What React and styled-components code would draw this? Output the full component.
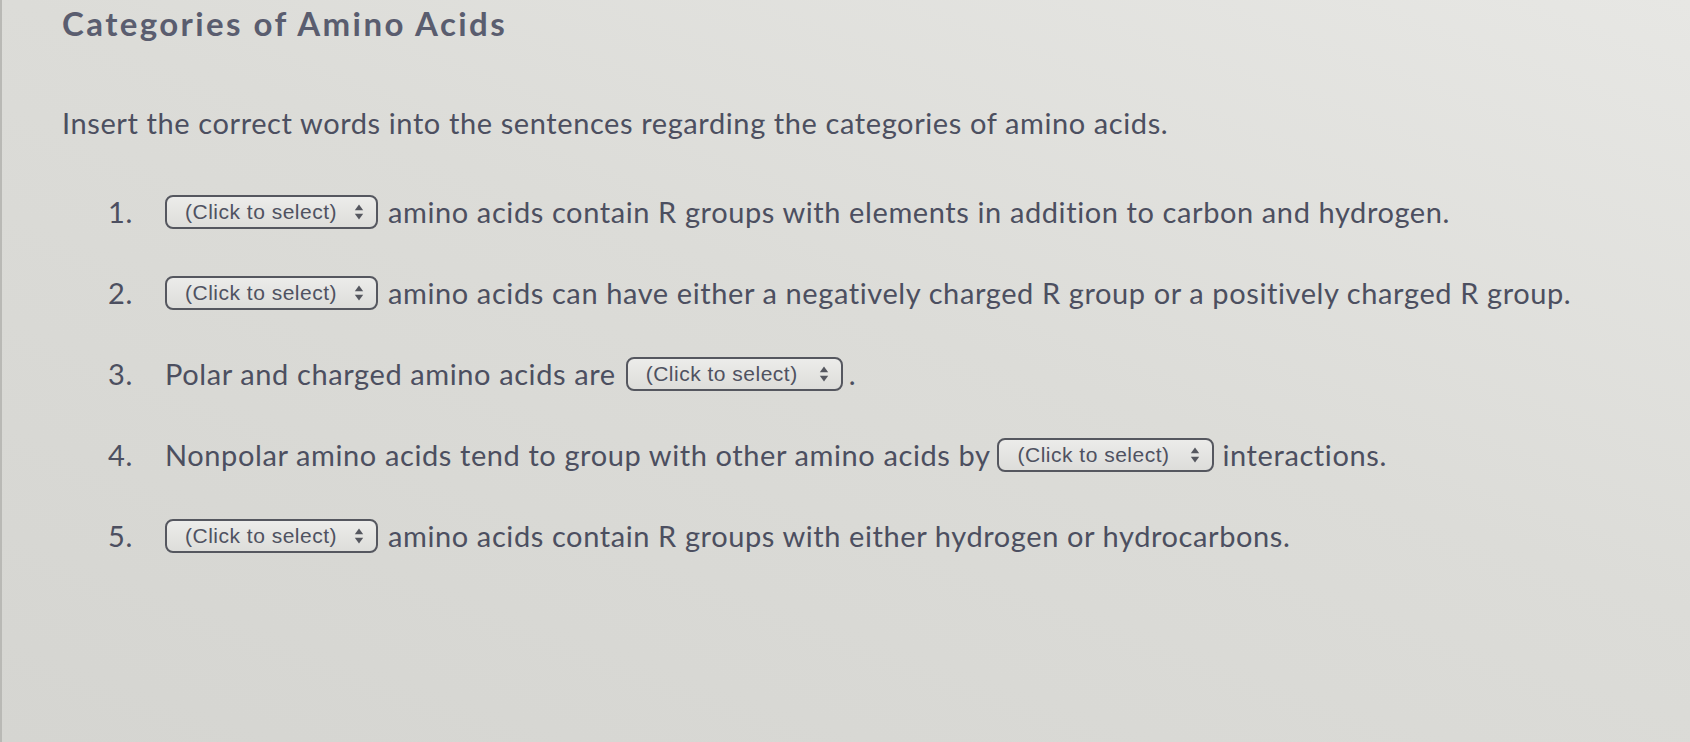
import React from 'react'
import styled, { createGlobalStyle } from 'styled-components'

const GlobalStyle = createGlobalStyle`
  html, body {
    margin: 0;
    padding: 0;
  }
  body {
    background: #dadad6;
  }
`

const Pagina = styled.main`
  box-sizing: border-box;
  width: 1690px;
  height: 742px;
  overflow: hidden;
  padding: 3px 0 0 60px;
  border-left: 2px solid #b9b9b5;
  background: linear-gradient(200deg, #e7e7e4 0%, #dcdcd8 45%, #d5d5d1 100%);
  font-family: Lato, "Open Sans", sans-serif;
  color: #4c4f60;
`

const Titulo = styled.h1`
  margin: 0;
  font-size: 33px;
  line-height: 40px;
  font-weight: 700;
  letter-spacing: 2.4px;
  color: #5a5d6f;
`

const Instrucao = styled.p`
  margin: 60px 0 0 0;
  font-size: 29px;
  line-height: 40px;
  letter-spacing: 0.6px;
`

const Lista = styled.ol`
  list-style: none;
  margin: 28px 0 0 0;
  padding: 0;
`

const Item = styled.li`
  display: grid;
  grid-template-columns: 57px auto;
  align-items: center;
  height: 81px;
  margin-left: 46px;
  font-size: 29px;
  letter-spacing: 0.6px;
`

const Numero = styled.span``

const Frase = styled.span`
  display: flex;
  align-items: center;
  white-space: nowrap;
`

const Caixa = styled.span`
  box-sizing: border-box;
  display: inline-flex;
  align-items: center;
  justify-content: space-between;
  width: ${p => p.largura || 213}px;
  height: 34px;
  padding: 0 12px 0 18px;
  margin: 0 ${p => p.direita ?? 10}px 0 ${p => p.esquerda ?? 0}px;
  border: 2px solid #55575f;
  border-radius: 8px;
  background: linear-gradient(#ececea, #dddddA);
  font-family: "Liberation Sans", Arial, sans-serif;
  font-size: 21px;
  letter-spacing: 0.5px;
  color: #4f5261;
`

function Setas() {
  return (
    <svg width="10" height="18" viewBox="0 0 10 18">
      <path d="M5 1.5 L9.2 7.3 L0.8 7.3 Z" fill="#55575f" />
      <path d="M5 16.5 L9.2 10.7 L0.8 10.7 Z" fill="#55575f" />
    </svg>
  )
}

function Seletor(props) {
  return (
    <Caixa {...props}>
      <span>(Click to select)</span>
      <Setas />
    </Caixa>
  )
}

export default function App() {
  return (
    <>
      <GlobalStyle />
      <Pagina>
        <Titulo>Categories of Amino Acids</Titulo>
        <Instrucao>Insert the correct words into the sentences regarding the categories of amino acids.</Instrucao>
        <Lista>
          <Item>
            <Numero>1.</Numero>
            <Frase>
              <Seletor />
              amino acids contain R groups with elements in addition to carbon and hydrogen.
            </Frase>
          </Item>
          <Item>
            <Numero>2.</Numero>
            <Frase>
              <Seletor />
              amino acids can have either a negatively charged R group or a positively charged R group.
            </Frase>
          </Item>
          <Item>
            <Numero>3.</Numero>
            <Frase>
              Polar and charged amino acids are
              <Seletor esquerda={10} direita={6} largura={217} />.
            </Frase>
          </Item>
          <Item>
            <Numero>4.</Numero>
            <Frase>
              Nonpolar amino acids tend to group with other amino acids by
              <Seletor esquerda={7} direita={8} largura={217} />
              interactions.
            </Frase>
          </Item>
          <Item>
            <Numero>5.</Numero>
            <Frase>
              <Seletor />
              amino acids contain R groups with either hydrogen or hydrocarbons.
            </Frase>
          </Item>
        </Lista>
      </Pagina>
    </>
  )
}
